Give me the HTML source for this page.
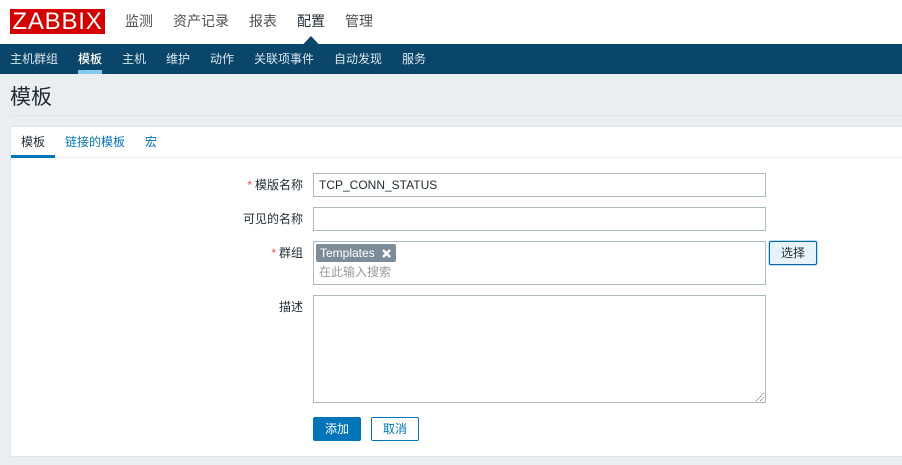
<!DOCTYPE html>
<html lang="zh"><head><meta charset="utf-8"><title>模板</title>
<style>
*{box-sizing:border-box}
html,body{margin:0;padding:0}
body{width:902px;height:465px;overflow:hidden;position:relative;background:#ebeef0;font-family:"Liberation Sans","Noto Sans CJK SC",sans-serif;font-size:12px;color:#1f2c33}
.a{position:absolute;white-space:nowrap}
.box{position:absolute;background:#fff;border:1px solid #acbbc2}
.t{line-height:20px}
.n{color:#4f4f4f;font-size:14px;top:11px;line-height:20px}
.s{color:#d8e6ee;font-size:12px;top:49px;line-height:20px}
.l{line-height:16px;text-align:right;right:599px}
.l b{font-weight:normal;color:#e8524a;margin-right:3px}
.tab{color:#0275b8;top:132px;line-height:20px}
</style></head><body>
<div class="a" style="left:0;top:0;width:902px;height:44px;background:#fff"></div>
<div class="a" style="left:10px;top:9px;width:95px;height:25px;background:#d40000;color:#fff;font-size:24px;line-height:26px;text-align:center;letter-spacing:.8px;overflow:hidden">ZABBIX</div>
<div class="a n" style="left:125px">监测</div>
<div class="a n" style="left:173px">资产记录</div>
<div class="a n" style="left:249px">报表</div>
<div class="a n" style="left:297px;color:#1f2c33">配置</div>
<div class="a n" style="left:345px">管理</div>
<div class="a" style="left:0;top:44px;width:902px;height:30px;background:#0a466a"></div>
<svg class="a" style="left:302px;top:35px" width="18" height="10"><path d="M1 9.5L9 1l8 8.500z" fill="#0a466a"/></svg>
<div class="a s" style="left:10px">主机群组</div>
<div class="a s" style="left:78px;color:#fff;font-weight:500">模板</div>
<div class="a" style="left:78px;top:70px;width:24px;height:4px;background:#85c8f0"></div>
<div class="a s" style="left:122px">主机</div>
<div class="a s" style="left:166px">维护</div>
<div class="a s" style="left:210px">动作</div>
<div class="a s" style="left:254px">关联项事件</div>
<div class="a s" style="left:334px">自动发现</div>
<div class="a s" style="left:402px">服务</div>
<div class="a" style="left:10px;top:84px;font-size:21px;line-height:28px;color:#1f2c33">模板</div>
<div class="a" style="left:10px;top:115px;width:892px;height:1px;background:#dfe4e7"></div>
<div class="a" style="left:10px;top:126px;width:892px;height:331px;background:#fff;border:1px solid #dfe4e7;border-right:0"></div>
<div class="a" style="left:11px;top:157px;width:891px;height:1px;background:#ebeef0"></div>
<div class="a" style="left:11px;top:155px;width:44px;height:3px;background:#0275b8"></div>
<div class="a tab" style="left:21px;color:#1f2c33">模板</div>
<div class="a tab" style="left:65px">链接的模板</div>
<div class="a tab" style="left:145px">宏</div>
<div class="a l" style="top:177px"><b>*</b>模版名称</div>
<div class="box" style="left:313px;top:173px;width:453px;height:24px"></div>
<div class="a" style="left:319px;top:175px;line-height:20px;font-size:12px">TCP_CONN_STATUS</div>
<div class="a l" style="top:211px">可见的名称</div>
<div class="box" style="left:313px;top:207px;width:453px;height:24px"></div>
<div class="a l" style="top:245px"><b>*</b>群组</div>
<div class="box" style="left:313px;top:241px;width:453px;height:44px"></div>
<div class="a" style="left:316px;top:244px;width:80px;height:18px;background:#7a8d99;border-radius:2px;color:#fff;line-height:18px;padding-left:4px">Templates</div>
<svg class="a" style="left:381px;top:248px" width="11" height="11"><path d="M2 2l7 7M9 2l-7 7" stroke="#fff" stroke-width="2.500"/></svg>
<div class="a" style="left:319px;top:263px;color:#9a9a9a;line-height:18px">在此输入搜索</div>
<div class="a" style="left:768px;top:240px;width:50px;height:26px;border-radius:3px;background:#b8dcf5"></div>
<div class="a" style="left:769px;top:241px;width:48px;height:24px;border:1px solid #0a6aa8;border-radius:2px;background:#e6f3fc;text-align:center;line-height:22px">选择</div>
<div class="a l" style="top:299px">描述</div>
<div class="box" style="left:313px;top:295px;width:453px;height:108px"></div>
<svg class="a" style="left:755px;top:392px" width="10" height="10"><path d="M1 9L9 1M5 9L9 5" stroke="#666" stroke-width="1" stroke-dasharray="1 1"/></svg>
<div class="a" style="left:313px;top:417px;width:48px;height:24px;background:#0275b8;border-radius:2px;color:#fff;text-align:center;line-height:24px">添加</div>
<div class="a" style="left:371px;top:417px;width:48px;height:24px;background:#fff;border:1px solid #0275b8;border-radius:2px;color:#0275b8;text-align:center;line-height:22px">取消</div>
</body></html>
